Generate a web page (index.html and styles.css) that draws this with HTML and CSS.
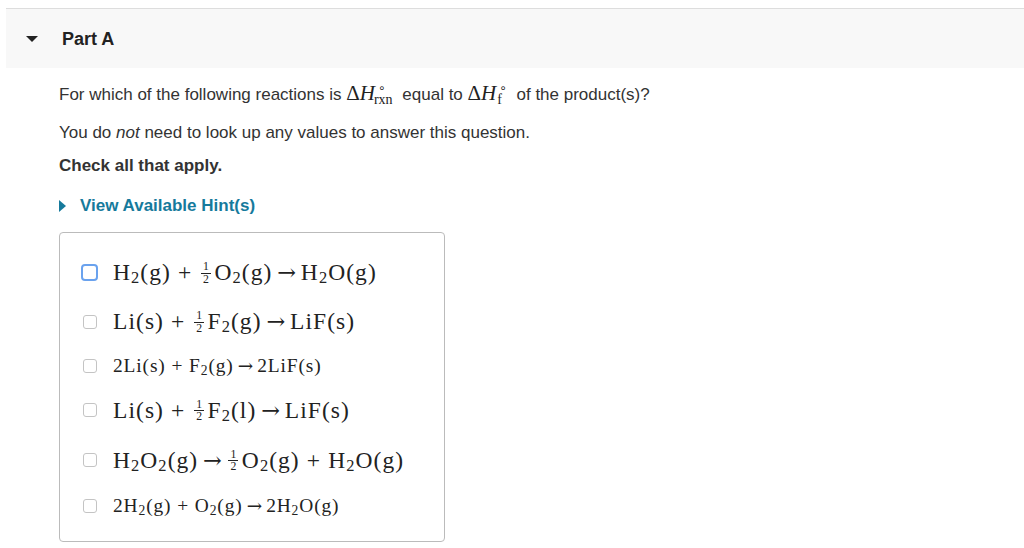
FILE: index.html
```html
<!DOCTYPE html>
<html>
<head>
<meta charset="utf-8">
<link rel="stylesheet" href="styles.css">
</head>
<body>
<div class="part-header">
  <span class="caret-down"></span>
  <span class="part-title">Part A</span>
</div>
<div class="content">
  <p class="q">For which of the following reactions is <span class="m"><span class="mr">Δ</span><span class="mi">H</span><span class="scripts"><span class="sup">∘</span><span class="sub">rxn</span></span></span> equal to <span class="m"><span class="mr">Δ</span><span class="mi">H</span><span class="scripts f"><span class="sup">∘</span><span class="sub">f</span></span></span> of the product(s)?</p>
  <p class="q2">You do <em>not</em> need to look up any values to answer this question.</p>
  <p class="q3">Check all that apply.</p>
  <div class="hint"><span class="caret-right"></span><span>View Available Hint(s)</span></div>
  <div class="choices">
    <div class="row big r1"><span class="cb focus"></span><span class="eq">H<sub>2</sub>(g)<span class="op">+</span><span class="frac"><span>1</span><span>2</span></span>O<sub>2</sub>(g)<span class="arr">→</span>H<sub>2</sub>O(g)</span></div>
    <div class="row big r2"><span class="cb"></span><span class="eq">Li(s)<span class="op">+</span><span class="frac"><span>1</span><span>2</span></span>F<sub>2</sub>(g)<span class="arr">→</span>LiF(s)</span></div>
    <div class="row small r3"><span class="cb"></span><span class="eq">2Li(s)<span class="op">+</span>F<sub>2</sub>(g)<span class="arr">→</span>2LiF(s)</span></div>
    <div class="row big r4"><span class="cb"></span><span class="eq">Li(s)<span class="op">+</span><span class="frac"><span>1</span><span>2</span></span>F<sub>2</sub>(l)<span class="arr">→</span>LiF(s)</span></div>
    <div class="row big r5"><span class="cb"></span><span class="eq">H<sub>2</sub>O<sub>2</sub>(g)<span class="arr">→</span><span class="frac"><span>1</span><span>2</span></span>O<sub>2</sub>(g)<span class="op">+</span>H<sub>2</sub>O(g)</span></div>
    <div class="row small r6"><span class="cb"></span><span class="eq">2H<sub>2</sub>(g)<span class="op">+</span>O<sub>2</sub>(g)<span class="arr">→</span>2H<sub>2</sub>O(g)</span></div>
  </div>
</div>
</body>
</html>
```
FILE: styles.css
```css
html, body {
  margin: 0;
  padding: 0;
  background: #fff;
}
body {
  font-family: "Liberation Sans", Arial, sans-serif;
  color: #333;
  font-size: 17px;
}
.part-header {
  margin-top: 8px;
  margin-left: 6px;
  border-top: 1px solid #ddd;
  background: #f8f8f8;
  height: 59px;
  display: flex;
  align-items: center;
}
.caret-down {
  width: 0;
  height: 0;
  border-left: 6px solid transparent;
  border-right: 6px solid transparent;
  border-top: 6px solid #222;
  margin-left: 20px;
  margin-right: 24px;
  margin-top: 1px;
}
.part-title {
  font-weight: bold;
  font-size: 18px;
  color: #222;
  margin-top: 2px;
}
.content {
  padding-left: 59px;
}
.q {
  margin: 14px 0 0 0;
  line-height: 20px;
  height: 23px;
  white-space: nowrap;
}
.q2 {
  margin: 18px 0 0 0;
  line-height: 20px;
}
.q3 {
  margin: 13px 0 0 0;
  line-height: 20px;
  font-weight: bold;
}
.hint {
  margin-top: 20px;
  line-height: 20px;
  font-weight: bold;
  color: #167a9c;
  display: flex;
  align-items: center;
}
.caret-right {
  width: 0;
  height: 0;
  border-top: 6px solid transparent;
  border-bottom: 6px solid transparent;
  border-left: 7px solid #167a9c;
  margin-right: 14px;
}
.m {
  font-family: "Liberation Serif", "DejaVu Serif", serif;
  font-size: 21px;
  line-height: 20px;
  color: #222;
  white-space: nowrap;
}
.mi { font-style: italic; margin-right: 1px; }
.scripts {
  display: inline-flex;
  flex-direction: column;
  vertical-align: 8px;
  font-size: 14px;
  line-height: 12px;
  margin-right: 5px;
}
.scripts .sup {
  font-family: "DejaVu Sans", sans-serif;
  font-size: 12px;
  margin-left: 2px;
  line-height: 12px;
}
.scripts .sub { margin-left: -2px; }
.scripts.f .sub { margin-left: 0; }
.choices {
  margin-top: 16px;
  width: 384px;
  height: 308px;
  border: 1px solid #bbb;
  border-radius: 4px;
  display: flex;
  flex-direction: column;
}
.row {
  display: flex;
  align-items: center;
  padding-left: 22px;
  font-family: "Liberation Serif", "DejaVu Serif", serif;
  color: #222;
  white-space: nowrap;
}
.row.big { font-size: 23.5px; }
.row.small { font-size: 19.4px; }
.eq { letter-spacing: 0.045em; }
.r1 { height: 49px; margin-top: 15px; }
.r2 { height: 49px; }
.r3 { height: 40px; }
.r4 { height: 48px; }
.r5 { height: 52px; }
.r6 { height: 40px; }
.cb {
  width: 12px;
  height: 12px;
  border: 1px solid #c4c4c4;
  border-radius: 3px;
  background: #fff;
  margin-left: 1px;
  margin-right: 16px;
  flex: none;
}
.cb.focus {
  width: 13px;
  height: 13px;
  border: 2px solid #6aa2ee;
  border-radius: 4px;
  margin-left: -1px;
  margin-right: 15px;
}
.eq sub {
  font-size: 0.7em;
  vertical-align: -0.2em;
  line-height: 0;
}
.op { margin: 0 0.3em; }
.arr {
  font-family: "DejaVu Serif", serif;
  font-size: 0.95em;
  margin: 0 0.22em;
  letter-spacing: 0;
}
.frac {
  display: inline-flex;
  flex-direction: column;
  align-items: center;
  font-size: 0.5em;
  line-height: 1;
  margin: 0 0.3em 0 0.15em;
  vertical-align: 0.85em;
  letter-spacing: 0;
}
.frac span:first-child {
  border-bottom: 1px solid #222;
  padding: 0 2px;
}
```
